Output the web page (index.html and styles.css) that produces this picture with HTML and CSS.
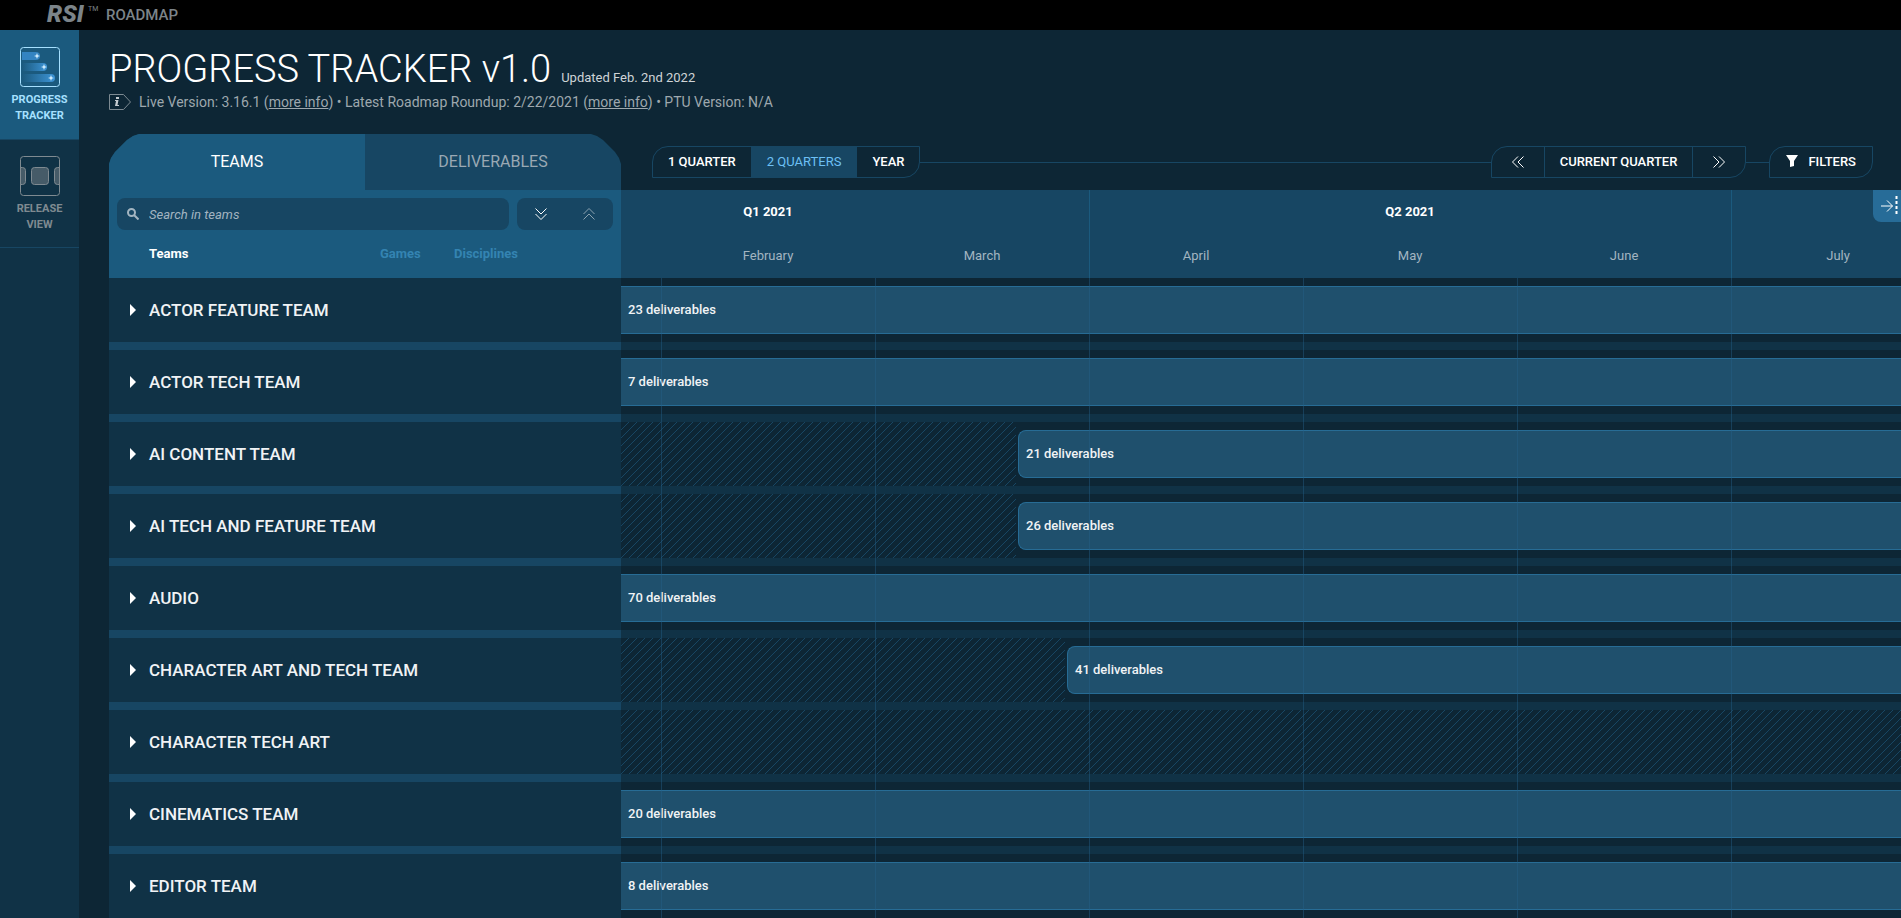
FILE: index.html
```html
<!DOCTYPE html>
<html lang="en">
  <head>
    <meta charset="UTF-8" />
    <meta name="viewport" content="width=device-width, initial-scale=1.0" />
    <title>Roadmap - Progress Tracker</title>
    <link rel="stylesheet" href="styles.css">
  </head>
  <body>
    <header class="topbar">
      <svg class="logo" width="52" height="30" viewBox="0 0 52 30" fill="#7c8489">
        <text class="logo-name" x="0" y="22">RSI</text>
        <text class="logo-tm" x="41" y="11">TM</text>
      </svg>
      <span class="topbar-title">ROADMAP</span>
    </header>

    <div class="layout">
      <nav class="sidebar">
        <a class="side-item active" href="#progress">
          <svg width="40" height="40" viewBox="0 0 40 40">
            <defs>
              <linearGradient id="trail">
                <stop offset="0" stop-color="#3d94d6" stop-opacity="0" />
                <stop offset="1" stop-color="#3d94d6" />
              </linearGradient>
            </defs>
            <path d="M2 5h14a4 4 0 0 1 0 8H2z" fill="#3384c2" />
            <path d="M2 16h21a4 4 0 0 1 0 8H2z" fill="url(#trail)" />
            <path d="M2 27h29a4 4 0 0 1 0 8H2z" fill="url(#trail)" />
            <path d="M17 6l.8 2.200L20 9l-2.200.8L17 12l-.8-2.200L14 9l2.200-.8zM24 17l.8 2.200L27 20l-2.200.8L24 23l-.8-2.200L21 20l2.200-.8zM31 28l.8 2.200L34 31l-2.200.8L31 34l-.8-2.200L28 31l2.200-.8z" fill="#d5f0ff" />
            <rect x=".5" y=".5" width="39" height="39" rx="3" fill="none" stroke="#a6e0ff" />
          </svg>
          <span>PROGRESS TRACKER</span>
        </a>
        <a class="side-item" href="#release">
          <svg width="40" height="40" viewBox="0 0 40 40" fill="#465b68" stroke="#7f8a91">
            <rect x=".5" y=".5" width="39" height="39" rx="3" fill="none" />
            <path d="M.5 11.500h2q3 0 3 3v11q0 3-3 3h-2zM39.500 11.500h-2q-3 0-3 3v11q0 3 3 3h2z" />
            <rect x="11.500" y="11.500" width="17" height="17" rx="3" />
          </svg>
          <span>RELEASE VIEW</span>
        </a>
      </nav>

      <main class="main">
        <div class="heading">
          <h1>PROGRESS TRACKER v1.0</h1>
          <span class="updated">Updated Feb. 2nd 2022</span>
        </div>
        <div class="versions">
          <svg width="22" height="16" viewBox="0 0 22 16">
            <path d="M.5.5h14l7 7.500-7 7.500H.5z" fill="none" stroke="#7d8a92" />
            <path d="M7 3h3v2H7zM6 6h3.500l-1 5H10v1H6l1-5H6z" fill="#c5cbd0" />
          </svg>
          <p>Live Version: 3.16.1 (<a href="#live">more info</a>) • Latest Roadmap Roundup: 2/22/2021 (<a href="#roundup">more info</a>) • PTU Version: N/A</p>
        </div>

        <div class="tracker">
          <section class="panel">
            <div class="tabs">
              <button class="tab active">TEAMS</button>
              <button class="tab">DELIVERABLES</button>
            </div>
            <div class="panel-head">
              <div class="panel-tools">
                <label class="search">
                  <svg width="12" height="12" viewBox="0 0 12 12" fill="none" stroke="#a3b5c1" stroke-width="2">
                    <circle cx="4.500" cy="4.500" r="3.500" />
                    <path d="M7 7l4.500 4.500" />
                  </svg>
                  <input type="text" placeholder="Search in teams" aria-label="Search in teams" />
                </label>
                <div class="expand">
                  <button aria-label="Expand all">
                    <svg width="12" height="12" viewBox="0 0 12 12"><path d="M.5.5L6 6 11.500.5M.5 6L6 11.500 11.500 6" /></svg>
                  </button>
                  <button class="dim" aria-label="Collapse all">
                    <svg width="12" height="12" viewBox="0 0 12 12"><path d="M.5 6L6 .5 11.500 6M.5 11.500L6 6l5.500 5.500" /></svg>
                  </button>
                </div>
              </div>
              <div class="legend">
                <span class="legend-teams">Teams</span>
                <span class="legend-games">Games</span>
                <span>Disciplines</span>
              </div>
            </div>
            <div class="teams">
              <button class="team">ACTOR FEATURE TEAM</button>
              <button class="team">ACTOR TECH TEAM</button>
              <button class="team">AI CONTENT TEAM</button>
              <button class="team">AI TECH AND FEATURE TEAM</button>
              <button class="team">AUDIO</button>
              <button class="team">CHARACTER ART AND TECH TEAM</button>
              <button class="team">CHARACTER TECH ART</button>
              <button class="team">CINEMATICS TEAM</button>
              <button class="team">EDITOR TEAM</button>
            </div>
          </section>

          <section class="schedule">
            <div class="toolbar">
              <div class="group">
                <button>1 QUARTER</button>
                <button class="active">2 QUARTERS</button>
                <button>YEAR</button>
              </div>
              <span class="line"></span>
              <div class="group">
                <button class="arrow" aria-label="Previous quarter">
                  <svg width="12" height="12" viewBox="0 0 12 12"><path d="M6 .5L.5 6 6 11.500M11.500.5L6 6l5.500 5.500" /></svg>
                </button>
                <button>CURRENT QUARTER</button>
                <button class="arrow" aria-label="Next quarter">
                  <svg width="12" height="12" viewBox="0 0 12 12"><path d="M.5.5L6 6 .5 11.500M6 .5L11.500 6 6 11.500" /></svg>
                </button>
              </div>
              <span class="line short"></span>
              <div class="group">
                <button class="filters">
                  <svg width="12" height="12" viewBox="0 0 12 12"><path class="solid" d="M0 0h12L8 6v5l-4 1V6z" /></svg>
                  FILTERS
                </button>
              </div>
            </div>

            <div class="timeline">
              <div class="dates columns">
                <span class="quarter q1">Q1 2021</span>
                <span class="quarter q2">Q2 2021</span>
                <span class="month"></span>
                <span class="month">February</span>
                <span class="month">March</span>
                <span class="month start">April</span>
                <span class="month">May</span>
                <span class="month">June</span>
                <span class="month start">July</span>
                <button class="today" aria-label="Go to today">
                  <svg width="17" height="20" viewBox="0 0 17 20">
                    <path d="M0 10h11.500M6 4.500l5.500 5.500L6 15.500" />
                    <path d="M15.500 0v20" stroke-width="2" stroke-dasharray="3 2" />
                  </svg>
                </button>
              </div>
              <div class="rows">
                <div class="row"><div class="bar">23 deliverables</div></div>
                <div class="row"><div class="bar">7 deliverables</div></div>
                <div class="row"><div class="idle" style="width: 30.86%"></div><div class="bar late">21 deliverables</div></div>
                <div class="row"><div class="idle" style="width: 30.86%"></div><div class="bar late">26 deliverables</div></div>
                <div class="row"><div class="bar">70 deliverables</div></div>
                <div class="row"><div class="idle" style="width: 34.69%"></div><div class="bar late">41 deliverables</div></div>
                <div class="row"><div class="idle" style="width: 100%"></div></div>
                <div class="row"><div class="bar">20 deliverables</div></div>
                <div class="row"><div class="bar">8 deliverables</div></div>
                <div class="gridlines columns">
                  <i></i><i></i><i></i><i></i><i></i><i></i><i></i>
                </div>
              </div>
            </div>
          </section>
        </div>
      </main>
    </div>
  </body>
</html>
```
FILE: styles.css
```css
* {
    box-sizing: border-box;
}
body {
    margin: 0;
    height: 100vh;
    overflow: hidden;
    display: flex;
    flex-direction: column;
    background-color: #0d2635;
    color: white;
    font-family: Roboto, "Liberation Sans", sans-serif;
    font-size: 14px;
}
button {
    background: none;
    border: none;
    padding: 0;
    color: inherit;
    font: inherit;
    cursor: pointer;
}
svg {
    flex: none;
}
h1, p {
    margin: 0;
}

/* Top bar */
.topbar {
    flex: none;
    display: flex;
    align-items: center;
    gap: 7px;
    height: 30px;
    padding-left: 47px;
    background-color: #000;
}
.logo {
    overflow: visible;
}
.logo-name {
    font-size: 24px;
    font-style: italic;
    font-weight: 900;
}
.logo-tm {
    font-size: 7px;
}
.topbar-title {
    color: #7c8489;
    font-size: 15px;
    font-weight: 500;
}

/* Sidebar */
.layout {
    flex: 1;
    min-height: 0;
    display: flex;
}
.sidebar {
    flex: none;
    width: 79px;
    background-color: #103246;
}
.side-item {
    display: flex;
    flex-direction: column;
    align-items: center;
    gap: 5px;
    height: 109px;
    padding: 16px 8px 0;
    border: solid #174663;
    border-width: 1px 0;
    color: #7f8a91;
    font-size: 11px;
    font-weight: 700;
    line-height: 16px;
    text-align: center;
    text-decoration: none;
}
.side-item.active {
    border-color: #1b5a7e;
    background-color: #1b5a7e;
    color: #a6e0ff;
}

/* Heading */
.main {
    flex: 1;
    min-width: 0;
    padding: 16px 0 0 30px;
}
.heading {
    display: flex;
    align-items: baseline;
    gap: 10px;
}
h1 {
    font-size: 38px;
    font-weight: 300;
    line-height: 46px;
}
.updated {
    color: #cfd4d7;
    font-size: 13px;
}
.versions {
    display: flex;
    align-items: center;
    gap: 8px;
    height: 20px;
    color: #9ea8ae;
}
.versions a {
    color: inherit;
}

/* Team panel */
.tracker {
    display: flex;
    margin-top: 22px;
}
.panel {
    flex: none;
    width: 512px;
}
.tabs {
    display: flex;
    height: 56px;
    background-color: #174663;
    clip-path: polygon(0 30px, 2px 24px, 6px 18px, 18px 6px, 24px 2px, 30px 0, 482px 0, 488px 2px, 494px 6px, 506px 18px, 510px 24px, 512px 30px, 512px 56px, 0 56px);
}
.tab {
    flex: 1;
    padding-bottom: 2px;
    color: #9aa9b4;
    font-size: 16px;
}
.tab.active {
    background-color: #1b5a7e;
    color: white;
}
.panel-head {
    height: 88px;
    padding: 8px 8px 0;
    background-color: #1b5a7e;
}
.panel-tools {
    display: flex;
    gap: 8px;
}
.search {
    flex: 1;
    display: flex;
    align-items: center;
    gap: 10px;
    height: 32px;
    padding: 0 10px;
    border-radius: 8px;
    background-color: #174663;
}
.search input {
    flex: 1;
    padding: 0;
    border: none;
    outline: none;
    background: none;
    color: white;
    font: italic 13px Roboto, sans-serif;
}
.search input::placeholder {
    color: #a3b5c1;
}
.expand {
    display: flex;
    width: 96px;
    border-radius: 8px;
    background-color: #174663;
}
.expand button {
    flex: 1;
    display: flex;
    align-items: center;
    justify-content: center;
}
.expand .dim {
    opacity: 0.5;
}
.expand path, .group path, .today path {
    fill: none;
    stroke: white;
}
.group path.solid {
    fill: white;
    stroke: none;
}
.legend {
    display: flex;
    padding-left: 32px;
    color: #3484b2;
    font-size: 13px;
    font-weight: 700;
    line-height: 48px;
}
.legend-teams {
    width: 231px;
    color: white;
}
.legend-games {
    width: 74px;
}
.teams {
    background-color: #174663;
}
.team {
    display: flex;
    align-items: center;
    gap: 13px;
    width: 100%;
    height: 64px;
    margin-bottom: 8px;
    padding-left: 21px;
    background-color: #103246;
    color: #f0f3f5;
    font-size: 17px;
    font-weight: 500;
}
.team::before {
    content: "";
    border: 6px solid transparent;
    border-left-color: white;
    border-right-width: 0;
}

/* Toolbar */
.schedule {
    flex: 1;
    min-width: 0;
}
.toolbar {
    display: flex;
    align-items: center;
    height: 56px;
    padding: 0 28px 0 31px;
}
.group {
    display: flex;
    height: 32px;
    border: 1px solid #174663;
    border-radius: 16px 0;
    overflow: hidden;
    font-size: 13px;
    font-weight: 500;
}
.group button {
    display: flex;
    align-items: center;
    gap: 10px;
    padding: 0 15px 2px;
}
.group button + button {
    border-left: 1px solid #174663;
}
.group button.active {
    background-color: #174663;
    color: #6dc0f5;
    font-weight: 400;
}
.group .arrow {
    padding: 0 20px;
}
.group .filters {
    padding: 0 16px 2px;
}
.line {
    flex: 1;
    height: 1px;
    background-color: #174663;
}
.line.short {
    flex: none;
    width: 23px;
}

/* Timeline */
.timeline {
    position: relative;
    overflow: hidden;
}
.columns {
    display: grid;
    grid-template-columns: 3.125% repeat(6, 16.72%);
}
.dates {
    grid-template-rows: 44px 44px;
    height: 88px;
    background-color: #174663;
    font-size: 13px;
    line-height: 44px;
    text-align: center;
}
.quarter {
    grid-row: 1;
    font-weight: 700;
}
.q1 {
    grid-column: 2;
}
.q2 {
    grid-column: 5;
}
.month {
    grid-row: 2;
    color: #a3b5c1;
}
.month.start {
    position: relative;
}
.month.start::before {
    content: "";
    position: absolute;
    left: 0;
    bottom: 0;
    width: 1px;
    height: 88px;
    background-color: #1b5a7e;
}
.today {
    position: absolute;
    top: 0;
    right: 0;
    width: 28px;
    height: 32px;
    padding-left: 4px;
    border-radius: 0 0 0 8px;
    background-color: #276c98;
}
.today svg {
    display: block;
    margin: auto;
}
.rows {
    position: relative;
}
.row {
    display: flex;
    align-items: center;
    gap: 2px;
    height: 72px;
    border-bottom: 8px solid #103246;
}
.idle {
    height: 64px;
    background-image: linear-gradient(135deg, transparent 46%, #174663 46%, #174663 54%, transparent 54%);
    background-size: 8px 8px;
}
.bar {
    flex: 1;
    height: 48px;
    padding-left: 7px;
    border: solid #276c95;
    border-width: 1px 0;
    background-color: #1f506d;
    color: #f0f3f5;
    font-size: 13px;
    font-weight: 500;
    line-height: 46px;
}
.bar.late {
    border-left-width: 1px;
    border-radius: 8px 0 0 8px;
}
.gridlines {
    position: absolute;
    inset: 0;
    pointer-events: none;
}
.gridlines i + i {
    border-left: 1px solid rgba(36, 96, 136, 0.45);
}
```
